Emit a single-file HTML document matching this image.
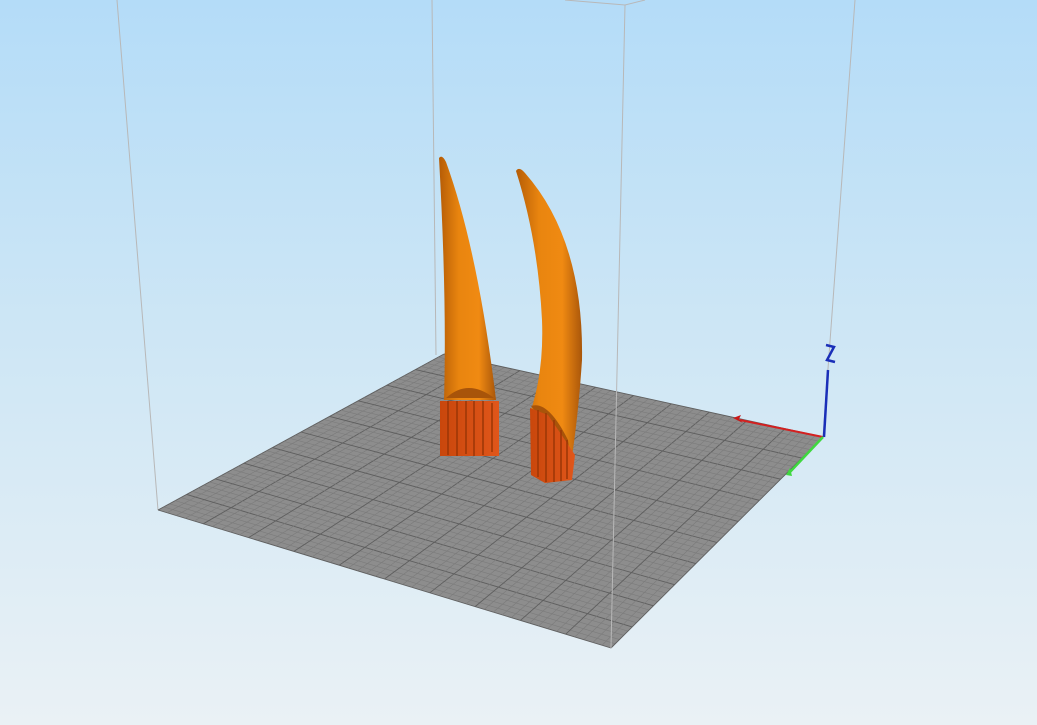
<!DOCTYPE html>
<html><head><meta charset="utf-8"><style>
html,body{margin:0;padding:0;width:1037px;height:725px;overflow:hidden;background:linear-gradient(#b4dcf8 0%,#cde6f5 45%,#eaf1f5 100%);}
svg{position:absolute;left:0;top:0}
</style></head><body>
<svg id="s" width="1037" height="725" viewBox="0 0 1037 725">
<defs>
<linearGradient id="h1" x1="0" x2="1" y1="0" y2="0"><stop offset="0" stop-color="#b55c06"/><stop offset="0.35" stop-color="#e9850f"/><stop offset="0.7" stop-color="#f08a12"/><stop offset="1" stop-color="#a9560a"/></linearGradient>
<linearGradient id="b1" x1="0" x2="1"><stop offset="0" stop-color="#c9470c"/><stop offset="1" stop-color="#e0561a"/></linearGradient>
</defs>
<g stroke="#b8b8b8" stroke-width="1" fill="none">
<line x1="117" y1="0" x2="158" y2="510"/>
<line x1="432" y1="0" x2="436" y2="355"/>
<line x1="855" y1="0" x2="823" y2="437"/>
<polyline points="565,0 625,5 645,0"/>
</g>
<polygon points="158,510 444,354 823,437 611,648" fill="#8d8d8d"/>
<g id="grid"></g>
<line x1="625" y1="5" x2="611" y2="648" stroke="#b8b8b8" stroke-width="1"/>
<!-- horn 1 -->
<path d="M439,158 Q442,154 446,162 Q478,250 496,400 L444,400 Q447,300 439,158Z" fill="url(#h1)"/>
<path d="M446,398 Q468,378 494,398 Z" fill="#a8540a"/>
<rect x="440" y="401" width="59" height="55" fill="url(#b1)"/>
<g stroke="#9b3606" stroke-width="1.5"><line x1="448" y1="401" x2="448" y2="455"/><line x1="457" y1="401" x2="457" y2="456"/><line x1="466" y1="401" x2="466" y2="454"/><line x1="474" y1="401" x2="474" y2="456"/><line x1="483" y1="401" x2="483" y2="455"/><line x1="492" y1="403" x2="492" y2="452"/></g>
<!-- horn 2 -->
<path d="M516,171 Q519,166 525,173 Q584,240 582,360 Q578,420 570,470 L531,410 Q544,370 542,320 Q538,240 516,171Z" fill="url(#h1)"/>
<path d="M531,406 Q548,400 568,440 L570,455 Z" fill="#a8540a"/>
<path d="M530,408 L548,415 L565,440 L575,455 L572,480 L545,483 L531,475Z" fill="url(#b1)"/>
<g stroke="#9b3606" stroke-width="1.5"><line x1="538" y1="410" x2="538" y2="477"/><line x1="546" y1="413" x2="546" y2="482"/><line x1="554" y1="420" x2="554" y2="482"/><line x1="561" y1="430" x2="561" y2="481"/><line x1="567" y1="440" x2="567" y2="479"/></g>
<!-- axes -->
<line x1="823" y1="437" x2="740" y2="420" stroke="#d42020" stroke-width="2"/>
<path d="M733,418 l8,-3 l-2,4 l4,4z" fill="#c81818"/>
<line x1="823" y1="437" x2="790" y2="472" stroke="#3fd83f" stroke-width="2.5"/>
<path d="M790,468 l2,8 l-6,-1z" fill="#3fd83f"/>
<line x1="824" y1="437" x2="828" y2="370" stroke="#1a2fb8" stroke-width="2.5"/>
<path d="M826,345 l8,2 l-7,13 l8,2" stroke="#1a2fb8" stroke-width="2.5" fill="none"/>
</svg>
<script>
var g=document.getElementById('grid'),L=[158,510],T=[444,354],R=[823,437],B=[611,648];
function lerp(a,b,t){return[a[0]+(b[0]-a[0])*t,a[1]+(b[1]-a[1])*t];}
var ns='http://www.w3.org/2000/svg',N=50;
for(var i=0;i<=N;i++){var t=i/N,maj=i%5==0;
[[lerp(L,T,t),lerp(B,R,t)],[lerp(L,B,t),lerp(T,R,t)]].forEach(function(p){
var l=document.createElementNS(ns,'line');l.setAttribute('x1',p[0][0]);l.setAttribute('y1',p[0][1]);l.setAttribute('x2',p[1][0]);l.setAttribute('y2',p[1][1]);
l.setAttribute('stroke',maj?'#5e5e5e':'#7b7b7b');l.setAttribute('stroke-width',maj?'0.9':'0.6');g.appendChild(l);});}
</script>
</body></html>
